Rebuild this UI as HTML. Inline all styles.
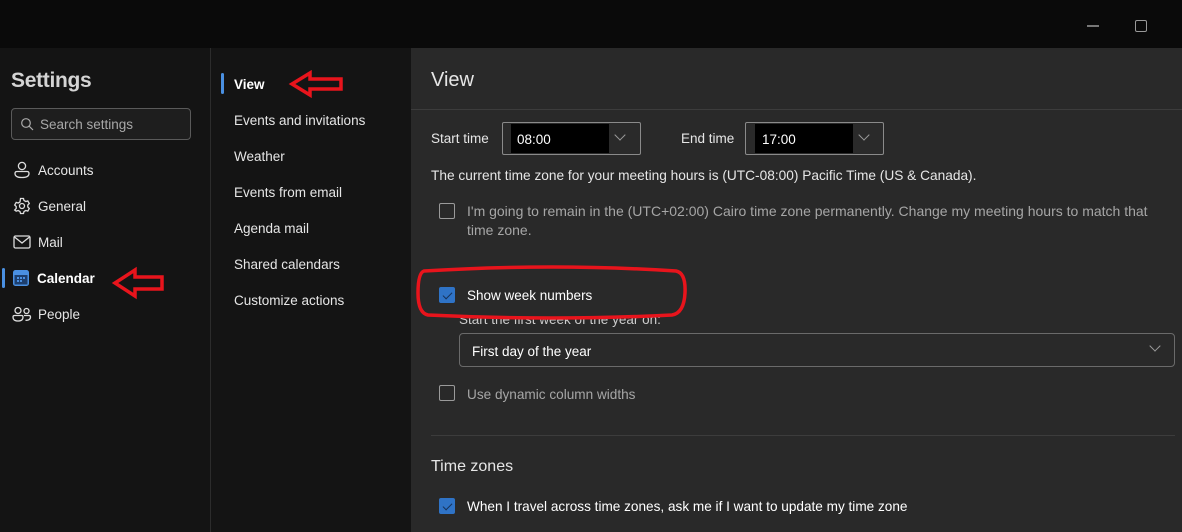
<!DOCTYPE html>
<html><head><style>
*{margin:0;padding:0;box-sizing:border-box}
body{width:1182px;height:532px;overflow:hidden;background:#141414;font-family:"Liberation Sans",sans-serif;color:#e6e6e6;font-size:13.5px;position:relative}
.a{position:absolute;white-space:nowrap}
.cb{position:absolute;width:16px;height:16px;border:1px solid #9a9a9a;border-radius:2px}
.cb.on{background:#2f73c6;border-color:#2f73c6}
.cb.on:after{content:"";position:absolute;left:5px;top:2px;width:4px;height:8px;border:solid #16325a;border-width:0 1.5px 1.5px 0;transform:rotate(45deg)}
.chev{position:absolute;width:8px;height:8px;border:solid #9a9a9a;border-width:0 1px 1px 0;transform:rotate(45deg)}
</style></head><body>
<div class="a" style="left:0;top:0;width:1182px;height:48px;background:#0a0a0a"></div>
<div class="a" style="left:1087px;top:25px;width:12px;height:2px;background:#777"></div>
<div class="a" style="left:1135px;top:20px;width:12px;height:12px;border:1.5px solid #999;border-radius:2px"></div>
<div class="a" style="left:210px;top:48px;width:1px;height:484px;background:#2c2c2c"></div>
<div class="a" style="left:411px;top:48px;width:771px;height:484px;background:#292929"></div>
<div class="a" style="left:411px;top:109px;width:771px;height:1px;background:#3c3c3c"></div>

<div class="a" style="left:11px;top:69px;font-size:21px;font-weight:bold;color:#d4d4d4;letter-spacing:-0.3px">Settings</div>
<div class="a" style="left:11px;top:108px;width:180px;height:32px;background:#1e1e1e;border:1px solid #5a5a5a;border-radius:4px"></div>
<svg class="a" style="left:20px;top:117px" width="14" height="14"><circle cx="6" cy="6" r="4.3" fill="none" stroke="#aaa" stroke-width="1.2"/><line x1="9" y1="9" x2="13" y2="13" stroke="#aaa" stroke-width="1.2"/></svg>
<div class="a" style="left:40px;top:117px;color:#a8a8a8">Search settings</div>

<svg class="a" style="left:13px;top:161px" width="18" height="18" fill="none" stroke="#ddd" stroke-width="1.3"><circle cx="9" cy="5" r="3.6"/><path d="M2 12.5q0-2 2-2h10q2 0 2 2q0 4-7 4t-7-4z"/></svg>
<div class="a" style="left:38px;top:163px">Accounts</div>
<svg class="a" style="left:13px;top:197px" width="18" height="18" fill="none" stroke="#ddd" stroke-width="1.3"><circle cx="9" cy="9" r="2.5"/><path d="M7.5 1.5h3l.5 2 1.8 1 2-.6 1.5 2.6-1.5 1.5v2l1.5 1.5-1.5 2.6-2-.6-1.8 1-.5 2h-3l-.5-2-1.8-1-2 .6L1.7 13l1.5-1.5v-2L1.7 8 3.2 5.4l2 .6 1.8-1z"/></svg>
<div class="a" style="left:38px;top:199px">General</div>
<svg class="a" style="left:13px;top:234px" width="18" height="16" fill="none" stroke="#ddd" stroke-width="1.3"><rect x="1" y="2" width="16" height="12" rx="1.5"/><path d="M1.5 3l7.5 6 7.5-6"/></svg>
<div class="a" style="left:38px;top:235px">Mail</div>
<div class="a" style="left:2px;top:268px;width:3px;height:20px;background:#4a90e2;border-radius:2px"></div>
<svg class="a" style="left:13px;top:270px" width="16" height="16"><rect x="0" y="0" width="16" height="16" rx="2.5" fill="#4a90e2"/><rect x="1.5" y="5" width="13" height="9.5" fill="#1d3f6e"/><g fill="#4a90e2"><rect x="4" y="7" width="2" height="2"/><rect x="7" y="7" width="2" height="2"/><rect x="10" y="7" width="2" height="2"/><rect x="4" y="10" width="2" height="2"/><rect x="7" y="10" width="2" height="2"/></g></svg>
<div class="a" style="left:37px;top:271px;font-weight:bold;color:#fff">Calendar</div>
<svg class="a" style="left:12px;top:306px" width="20" height="17" fill="none" stroke="#ddd" stroke-width="1.3"><circle cx="6" cy="4.5" r="3"/><circle cx="14.5" cy="5" r="2.5"/><path d="M1 11q0-1.5 1.5-1.5h7q1.5 0 1.5 1.5q0 4-5 4t-5-4z"/><path d="M12 9.5h5q1.5 0 1.5 1.5q0 3.5-5 3.3"/></svg>
<div class="a" style="left:38px;top:307px">People</div>

<svg class="a" style="left:110px;top:264px" width="60" height="38"><polygon points="5,19 25,6 25,13 52,13 52,25 25,25 25,32" fill="none" stroke="#e8141c" stroke-width="3.5"/></svg>
<svg class="a" style="left:287px;top:70px" width="60" height="30"><polygon points="5,14 23,3 23,9 54,9 54,19 23,19 23,25" fill="none" stroke="#e8141c" stroke-width="3.5"/></svg>

<div class="a" style="left:221px;top:73px;width:3px;height:21px;background:#4a90e2;border-radius:2px"></div>
<div class="a" style="left:234px;top:77px;font-weight:bold;color:#fff">View</div>
<div class="a" style="left:234px;top:113px">Events and invitations</div>
<div class="a" style="left:234px;top:149px">Weather</div>
<div class="a" style="left:234px;top:185px">Events from email</div>
<div class="a" style="left:234px;top:221px">Agenda mail</div>
<div class="a" style="left:234px;top:257px">Shared calendars</div>
<div class="a" style="left:234px;top:293px">Customize actions</div>

<div class="a" style="left:431px;top:69px;font-size:20px;color:#e6e6e6">View</div>
<div class="a" style="left:431px;top:131px">Start time</div>
<div class="a" style="left:502px;top:122px;width:139px;height:33px;border:1px solid #8a8a8a;border-radius:2px;background:#2a2a2a"></div>
<div class="a" style="left:511px;top:124px;width:98px;height:29px;background:#000"></div>
<div class="a" style="left:517px;top:132px;color:#fff">08:00</div>
<div class="chev" style="left:616px;top:131px"></div>
<div class="a" style="left:681px;top:131px">End time</div>
<div class="a" style="left:745px;top:122px;width:139px;height:33px;border:1px solid #8a8a8a;border-radius:2px;background:#2a2a2a"></div>
<div class="a" style="left:755px;top:124px;width:98px;height:29px;background:#000"></div>
<div class="a" style="left:762px;top:132px;color:#fff">17:00</div>
<div class="chev" style="left:860px;top:131px"></div>
<div class="a" style="left:431px;top:168px;font-size:13.7px">The current time zone for your meeting hours is (UTC-08:00) Pacific Time (US &amp; Canada).</div>
<div class="cb" style="left:439px;top:203px"></div>
<div class="a" style="left:467px;top:203px;color:#a6a6a6;font-size:14px">I'm going to remain in the (UTC+02:00) Cairo time zone permanently. Change my meeting hours to match that</div>
<div class="a" style="left:467px;top:222px;color:#a6a6a6;font-size:14px">time zone.</div>

<div class="a" style="left:459px;top:312px;color:#ccc">Start the first week of the year on:</div>
<svg class="a" style="left:414px;top:265px" width="276" height="56"><path d="M10 6 Q140 -2 262 6 Q272 8 271 28 Q270 48 258 50 Q140 56 14 50 Q4 48 4 28 Q4 8 10 6z" fill="#292929" stroke="#e8141c" stroke-width="3.5"/></svg>
<div class="cb on" style="left:439px;top:287px"></div>
<div class="a" style="left:467px;top:288px;color:#fff">Show week numbers</div>
<div class="a" style="left:459px;top:333px;width:716px;height:34px;border:1px solid #6a6a6a;border-radius:4px;background:#292929"></div>
<div class="a" style="left:472px;top:344px;color:#fff">First day of the year</div>
<div class="chev" style="left:1151px;top:342px"></div>
<div class="cb" style="left:439px;top:385px"></div>
<div class="a" style="left:467px;top:387px;color:#a6a6a6;font-size:13.6px">Use dynamic column widths</div>
<div class="a" style="left:431px;top:435px;width:744px;height:1px;background:#3c3c3c"></div>
<div class="a" style="left:431px;top:458px;font-size:16px">Time zones</div>
<div class="cb on" style="left:439px;top:498px"></div>
<div class="a" style="left:467px;top:499px;color:#fff;font-size:13.6px">When I travel across time zones, ask me if I want to update my time zone</div>
</body></html>
